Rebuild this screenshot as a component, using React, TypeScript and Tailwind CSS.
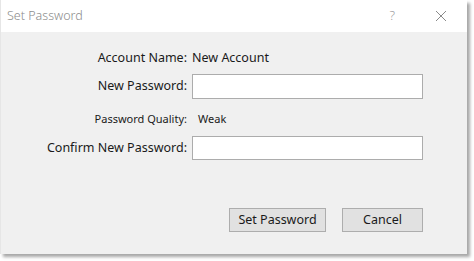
import React from "react";

const font = { fontFamily: '"Noto Sans", "Open Sans", Arial, sans-serif' };

function Field() {
  return <div className="h-full w-[231px] border border-[#acacac] bg-white" />;
}

export default function App() {
  return (
    <div className="h-[261px] w-[474px] bg-white" style={font}>
      <div className="w-[467px] border-l border-[#e6e6e6] shadow-[3px_3px_3px_rgba(0,0,0,0.35)]">
        <div className="flex h-[32px] items-center bg-white pl-[6px] pr-[20px]">
          <span className="text-[12.5px] font-light text-[#8c8c8c]">Set Password</span>
          <span className="ml-auto mr-[40px] text-[13px] font-light text-[#9a9a9a]">?</span>
          <svg width="12" height="12" viewBox="0 0 12 12" className="text-[#8a8a8a]">
            <path d="M1 1L11 11M11 1L1 11" stroke="currentColor" strokeWidth="1" fill="none" />
          </svg>
        </div>
        <div className="bg-[#f0f0f0] pb-[22px] pt-[16px] text-[#1a1a1a]">
          <div className="grid grid-cols-[191px_1fr] items-center">
            <div className="flex h-[20px] items-center justify-end pr-[5px] text-[12.5px]">Account Name:</div>
            <div className="flex h-[20px] items-center text-[12.5px]">New Account</div>

            <div className="mt-[6px] flex h-[25px] items-center justify-end pr-[5px] text-[12.5px]">New Password:</div>
            <div className="mt-[6px] h-[25px]"><Field /></div>

            <div className="mt-[10px] flex h-[20px] items-center justify-end pr-[5px] text-[11px]">Password Quality:</div>
            <div className="mt-[10px] flex h-[20px] items-center pl-[6px] text-[11px]">Weak</div>

            <div className="mt-[7px] flex h-[24px] items-center justify-end pr-[5px] text-[12.5px]">Confirm New Password:</div>
            <div className="mt-[7px] h-[24px]"><Field /></div>
          </div>
          <div className="mt-[48px] flex justify-end gap-[16px] pr-[44px]">
            <button type="button" className="h-[24px] w-[97px] border border-[#adadad] bg-[#e1e1e1] text-[12.5px] text-[#1a1a1a]">
              Set Password
            </button>
            <button type="button" className="h-[24px] w-[81px] border border-[#adadad] bg-[#e1e1e1] text-[12.5px] text-[#1a1a1a]">
              Cancel
            </button>
          </div>
        </div>
      </div>
    </div>
  );
}
